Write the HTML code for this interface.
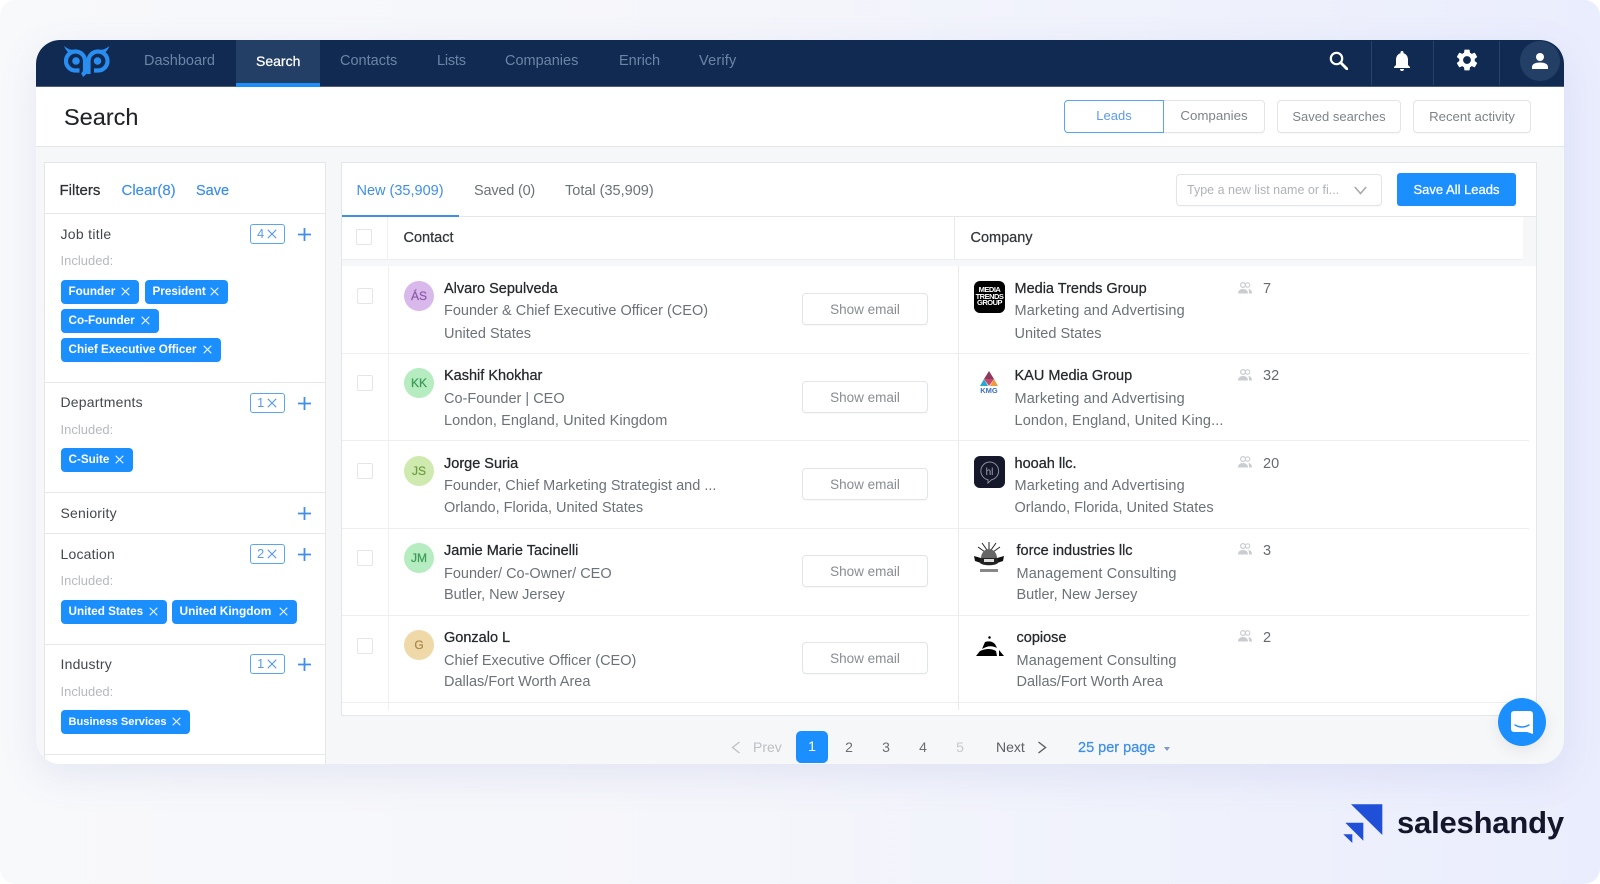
<!DOCTYPE html>
<html lang="en"><head><meta charset="utf-8"><title>Search</title>
<style>
html,body{margin:0;padding:0;background:#fff}
body{width:1600px;height:884px;overflow:hidden;position:relative;font-family:"Liberation Sans",Arial,sans-serif}
#bg{position:absolute;left:0;top:0;width:1600px;height:884px;border-radius:16px;background:linear-gradient(90deg,#f8f9fb 0%,#f5f6fb 45%,#eaedfd 100%)}
#card{position:absolute;left:36px;top:40px;width:1528px;height:724px;border-radius:24px;overflow:hidden;background:#f6f7f9;box-shadow:0 12px 40px rgba(100,110,190,.12)}
#in{position:absolute;left:-36px;top:-40px;width:1600px;height:884px}
.t{position:absolute;white-space:nowrap;line-height:20px;height:20px}
.a{position:absolute}
.m{-webkit-text-stroke:.25px currentColor}
.nav{font-size:14.5px;color:#6c84a6;top:51px}
.btn{position:absolute;box-sizing:border-box;background:#fff;border:1px solid #e2e5e8;border-radius:4px;text-align:center;font-size:13px;color:#7d8489;box-shadow:0 1px 1px rgba(0,0,0,.03)}
.lb{font-size:14px;letter-spacing:.2px;color:#44484d;left:60.5px}
.inc{font-size:13px;color:#b6b9bd;left:60.5px}
.hr{position:absolute;left:45px;width:280px;height:1px;background:#e6e8eb}
.c{position:absolute;box-sizing:border-box;height:24px;line-height:24px;padding-left:7.5px;background:#1c8fff;border-radius:4px;color:#fff;font-size:11.7px;font-weight:bold;white-space:nowrap}
.cx{position:absolute;right:9px;top:7px;width:9px;height:9px;color:#fff}
.b{position:absolute;box-sizing:border-box;left:250px;width:35px;height:20px;border:1px solid #5aa5ee;border-radius:3px;color:#5b9bea;font-size:13px;line-height:18px;padding-left:6px}
.b svg{position:absolute;left:16px;top:4px;width:10px;height:10px;color:#5b9bea}
.pl{position:absolute;left:298px;width:13px;height:13px;color:#3f8fe8}
.ck{position:absolute;box-sizing:border-box;left:357px;width:16px;height:16px;background:#fff;border:1px solid #e3e5e8;border-radius:2px}
.av{position:absolute;left:404px;width:30px;height:30px;border-radius:50%;text-align:center;line-height:30px;font-size:12px;-webkit-text-stroke:.25px currentColor}
.n{font-size:14.5px;color:#25282c;-webkit-text-stroke:.25px #25282c;margin-top:1px}
.s{font-size:14.5px;color:#6b7278;margin-top:1px}
.w{letter-spacing:.14px}
.se{left:802px;width:126px;height:32px;line-height:32px;font-size:13.5px;color:#888d92}
.pp{position:absolute;left:1238px;width:14px;height:12px;color:#c9cdd2}
.cn{font-size:14.5px;color:#666b70;left:1263px;margin-top:1px}
.rl{position:absolute;left:342px;width:1187px;height:1px;background:#eceef0}
.pg{font-size:14px;top:737px;width:30px;text-align:center;color:#6b6f73}
</style></head><body>
<svg width="0" height="0" style="position:absolute">
<symbol id="x" viewBox="0 0 10 10"><path d="M.8.8l8.4 8.4M9.2.8L.8 9.2" stroke="currentColor" stroke-width="1.1" fill="none"/></symbol>
<symbol id="p" viewBox="0 0 13 13"><path d="M6.5 0v13M0 6.5h13" stroke="currentColor" stroke-width="1.8" fill="none"/></symbol>
<symbol id="u" viewBox="0 0 14 12"><circle cx="5" cy="3" r="2.4" fill="none" stroke="currentColor" stroke-width="1.2"/><circle cx="9.6" cy="3" r="2.2" fill="none" stroke="currentColor" stroke-width="1.1"/><path d="M0 11.5c0-3 2.3-4.5 5-4.5s5 1.5 5 4.5zM10.5 7c2 .2 3.5 1.700 3.500 4.500h-3c0-1.800-.2-3.200-.5-4.500z" fill="currentColor"/></symbol>
</svg>
<div id="bg"></div>
<div id="card"><div id="in">
<!-- nav -->
<div class="a" style="left:36px;top:40px;width:1528px;height:47px;background:#112a52;border-bottom:1px solid #4a5f7d;box-sizing:border-box"></div>
<div class="a" style="left:236px;top:40px;width:84px;height:47px;background:#243f66"></div>
<div class="a" style="left:236px;top:82.5px;width:84px;height:4.5px;background:#1c8ffb"></div>
<svg class="a" style="left:60px;top:42px" width="54" height="36" viewBox="60 42 54 36"><g fill="none" stroke="#2a8df0" stroke-width="4.2"><path d="M85 61a9.500 9.500 0 1 0-9.500 9.500h4"/><path d="M88.500 61a9.500 9.500 0 1 1 9.500 9.500h-4"/><path d="M85 60v10q0 3.500-3 5"/><path d="M88.500 60v14"/></g><path d="M64 46q5 4 9 3.800l-3 4.200q-4-3-6-8zM109.500 46q-5 4-9 3.800l3 4.200q4-3 6-8z" fill="#2a8df0"/><circle cx="76" cy="61" r="3.800" fill="#2a8df0"/><circle cx="97.500" cy="61" r="3.800" fill="#2a8df0"/></svg>
<div class="t nav" style="left:144px">Dashboard</div>
<div class="t nav m" style="left:256px;color:#fff;font-size:14px">Search</div>
<div class="t nav" style="left:340px">Contacts</div>
<div class="t nav" style="left:437px;letter-spacing:-.2px">Lists</div>
<div class="t nav" style="left:505px">Companies</div>
<div class="t nav" style="left:619px">Enrich</div>
<div class="t nav" style="left:699px;letter-spacing:.2px">Verify</div>
<svg class="a" style="left:1329px;top:51px" width="19" height="19" viewBox="0 0 19 19"><circle cx="7.5" cy="7.5" r="5.7" fill="none" stroke="#fff" stroke-width="2.2"/><path d="M11.8 11.8L18 18" stroke="#fff" stroke-width="2.8" stroke-linecap="round"/></svg>
<div class="a" style="left:1371px;top:41px;width:1px;height:44px;background:#2a4268"></div>
<div class="a" style="left:1433px;top:41px;width:1px;height:44px;background:#2a4268"></div>
<div class="a" style="left:1499px;top:41px;width:1px;height:44px;background:#2a4268"></div>
<svg class="a" style="left:1390px;top:49px" width="24" height="24" viewBox="0 0 24 24"><path fill="#fff" d="M12 2a1.5 1.5 0 0 0-1.5 1.5v.7C7.6 5 6 7.6 6 10.5V16l-2 2v1h16v-1l-2-2v-5.5c0-2.9-1.6-5.5-4.5-6.3v-.7A1.5 1.5 0 0 0 12 2zM10 20a2 2 0 0 0 4 0z"/></svg>
<svg class="a" style="left:1454px;top:47px" width="26" height="26" viewBox="0 0 24 24"><path fill="#fff" d="M19.14 12.94c.04-.3.06-.61.06-.94 0-.32-.02-.64-.07-.94l2.03-1.58a.49.49 0 0 0 .12-.61l-1.92-3.32a.488.488 0 0 0-.59-.22l-2.39.96c-.5-.38-1.03-.7-1.62-.94l-.36-2.54a.484.484 0 0 0-.48-.41h-3.84c-.24 0-.43.17-.47.41l-.36 2.54c-.59.24-1.13.57-1.62.94l-2.39-.96c-.22-.08-.47 0-.59.22L2.74 8.87c-.12.21-.08.47.12.61l2.03 1.58c-.05.3-.09.63-.09.94s.02.64.07.94l-2.03 1.58a.49.49 0 0 0-.12.61l1.92 3.32c.12.22.37.29.59.22l2.39-.96c.5.38 1.03.7 1.62.94l.36 2.54c.05.24.24.41.48.41h3.84c.24 0 .44-.17.47-.41l.36-2.54c.59-.24 1.13-.56 1.62-.94l2.39.96c.22.08.47 0 .59-.22l1.92-3.32c.12-.22.07-.47-.12-.61l-2.01-1.58zM12 15.6c-1.98 0-3.6-1.62-3.6-3.6s1.62-3.6 3.6-3.6 3.6 1.62 3.6 3.6-1.62 3.6-3.6 3.6z"/></svg>
<div class="a" style="left:1520px;top:41px;width:40px;height:40px;border-radius:50%;background:#243f66"></div>
<svg class="a" style="left:1530px;top:51px" width="20" height="20" viewBox="0 0 20 20"><circle cx="10" cy="6" r="4" fill="#fff"/><path d="M2 18v-2c0-3 3.500-4.500 8-4.500s8 1.500 8 4.500v2z" fill="#fff"/></svg>
<!-- header -->
<div class="a" style="left:36px;top:87px;width:1528px;height:60px;background:#fff;border-bottom:1px solid #e4e7ea;box-sizing:border-box"></div>
<div class="t" style="left:64px;top:107px;font-size:23.5px;line-height:20px;color:#1f2226;-webkit-text-stroke:.1px #1f2226">Search</div>
<div class="btn" style="left:1163px;top:100px;width:102px;height:33px;line-height:30px;border-radius:0 4px 4px 0;font-size:13.3px">Companies</div>
<div class="btn" style="left:1064px;top:100px;width:100px;height:33px;line-height:30px;border-color:#5aa5ee;color:#5b9bea;border-radius:4px 0 0 4px">Leads</div>
<div class="btn" style="left:1277px;top:100px;width:124px;height:33px;line-height:31px;font-size:13px">Saved searches</div>
<div class="btn" style="left:1413px;top:100px;width:118px;height:33px;line-height:31px;font-size:13.2px">Recent activity</div>
<!-- filters -->
<div class="a" style="left:44px;top:162px;width:282px;height:620px;background:#fff;border:1px solid #e4e7ea;box-sizing:border-box"></div>
<div class="t m" style="left:59.5px;top:180.5px;font-size:15px;color:#2c3034">Filters</div>
<div class="t" style="left:121.5px;top:180.5px;font-size:15px;color:#3e8fe6;-webkit-text-stroke:.15px #3e8fe6">Clear(8)</div>
<div class="t" style="left:196px;top:180.5px;font-size:14.5px;color:#3e8fe6;-webkit-text-stroke:.2px #3e8fe6">Save</div>
<div class="hr" style="top:213px"></div>
<div class="t lb" style="top:224px;letter-spacing:.3px">Job title</div>
<div class="b" style="top:224px">4<svg><use href="#x"/></svg></div>
<svg class="pl" style="top:228px"><use href="#p"/></svg>
<div class="t inc" style="top:251px">Included:</div>
<div class="c" style="left:61px;top:280px;width:78px">Founder<svg class="cx"><use href="#x"/></svg></div>
<div class="c" style="left:145px;top:280px;width:83px">President<svg class="cx"><use href="#x"/></svg></div>
<div class="c" style="left:61px;top:308.5px;width:98px">Co-Founder<svg class="cx"><use href="#x"/></svg></div>
<div class="c" style="left:61px;top:337.5px;width:160px">Chief Executive Officer<svg class="cx"><use href="#x"/></svg></div>
<div class="hr" style="top:382px"></div>
<div class="t lb" style="top:392px">Departments</div>
<div class="b" style="top:393px">1<svg><use href="#x"/></svg></div>
<svg class="pl" style="top:396.5px"><use href="#p"/></svg>
<div class="t inc" style="top:420px">Included:</div>
<div class="c" style="left:61px;top:448px;width:71.5px">C-Suite<svg class="cx"><use href="#x"/></svg></div>
<div class="hr" style="top:492px"></div>
<div class="t lb" style="top:503px">Seniority</div>
<svg class="pl" style="top:507px"><use href="#p"/></svg>
<div class="hr" style="top:533px"></div>
<div class="t lb" style="top:543.5px">Location</div>
<div class="b" style="top:544px">2<svg><use href="#x"/></svg></div>
<svg class="pl" style="top:548px"><use href="#p"/></svg>
<div class="t inc" style="top:571px">Included:</div>
<div class="c" style="left:61px;top:599.5px;width:106px">United States<svg class="cx"><use href="#x"/></svg></div>
<div class="c" style="left:172px;top:599.5px;width:124.5px;font-size:11.9px;line-height:23px">United Kingdom<svg class="cx"><use href="#x"/></svg></div>
<div class="hr" style="top:644px"></div>
<div class="t lb" style="top:654px">Industry</div>
<div class="b" style="top:654px">1<svg><use href="#x"/></svg></div>
<svg class="pl" style="top:658px"><use href="#p"/></svg>
<div class="t inc" style="top:682px">Included:</div>
<div class="c" style="left:61px;top:710px;width:128.5px;font-size:11.1px">Business Services<svg class="cx"><use href="#x"/></svg></div>
<div class="hr" style="top:754px"></div>
<!-- right panel -->
<div class="a" style="left:341px;top:162px;width:1196px;height:554px;background:#fff;border:1px solid #e4e7ea;box-sizing:border-box"></div>
<div class="t" style="left:356.5px;top:180.5px;font-size:14.5px;color:#3e8fe6">New (35,909)</div>
<div class="t" style="left:474px;top:180.5px;font-size:14.5px;letter-spacing:-.2px;color:#6b7278">Saved (0)</div>
<div class="t" style="left:565px;top:180.5px;font-size:14.5px;color:#6b7278">Total (35,909)</div>
<div class="a" style="left:342px;top:216px;width:1194px;height:1px;background:#e4e7ea"></div>
<div class="a" style="left:342px;top:215px;width:117px;height:2px;background:#3e8fe6"></div>
<div class="btn" style="left:1176px;top:174px;width:206px;height:32px"></div>
<div class="t" style="left:1187px;top:180px;font-size:12.5px;color:#b0b3b8">Type a new list name or fi...</div>
<svg class="a" style="left:1354px;top:186px" width="13" height="9" viewBox="0 0 13 9"><path d="M.8 1l5.7 6.500L12.200 1" fill="none" stroke="#a7abaf" stroke-width="1.6"/></svg>
<div class="a m" style="left:1397px;top:173px;width:119px;height:33px;line-height:33px;background:#1c8fff;border-radius:3px;color:#fff;text-align:center;font-size:13px">Save All Leads</div>
<!-- table header -->
<div class="a" style="left:342px;top:259px;width:1194px;height:7px;background:#f6f7f9"></div>
<div class="a" style="left:1523px;top:217px;width:13px;height:49px;background:#f6f7f9"></div>
<div class="a" style="left:342px;top:259px;width:1181px;height:1px;background:#eceef0"></div>
<div class="a" style="left:387px;top:217px;width:1px;height:42px;background:#eef0f2"></div>
<div class="a" style="left:954px;top:217px;width:1px;height:42px;background:#e8eaec"></div>
<div class="ck" style="top:229px;left:356px"></div>
<div class="t m" style="left:403.5px;top:228px;font-size:14.5px;color:#33373b">Contact</div>
<div class="t m" style="left:970.5px;top:228px;font-size:14.5px;color:#33373b">Company</div>
<!-- rows -->
<div class="a" style="left:388px;top:266px;width:1px;height:444px;background:#eef0f2"></div>
<div class="a" style="left:958px;top:266px;width:1px;height:444px;background:#e8eaec"></div>
<div class="rl" style="top:353px"></div><div class="rl" style="top:440px"></div><div class="rl" style="top:528px"></div><div class="rl" style="top:615px"></div><div class="rl" style="top:702px"></div>

<div class="ck" style="top:288px"></div>
<div class="av" style="top:281px;background:#d9b8ec;color:#8c5aa8">ÁS</div>
<div class="t n" style="left:444px;top:278px">Alvaro Sepulveda</div>
<div class="t s" style="left:444px;top:300px">Founder &amp; Chief Executive Officer (CEO)</div>
<div class="t s" style="left:444px;top:322.5px">United States</div>
<div class="btn se" style="top:293px">Show email</div>
<div class="a" style="left:974px;top:281px;width:31px;height:32px;background:#000;border-radius:6px;color:#fff;font:bold 7.5px/6.5px 'Liberation Sans',sans-serif;text-align:center;padding-top:6px;box-sizing:border-box;letter-spacing:-.5px">MEDIA<br>TRENDS<br>GROUP</div>
<div class="t n" style="left:1014.5px;top:278px">Media Trends Group</div>
<div class="t s w" style="left:1014.5px;top:300px">Marketing and Advertising</div>
<div class="t s" style="left:1014.5px;top:322.5px">United States</div>
<svg class="pp" style="top:282px"><use href="#u"/></svg>
<div class="t cn" style="top:278px">7</div>

<div class="ck" style="top:375px"></div>
<div class="av" style="top:368px;background:#b5ecc0;color:#3f9c5a">KK</div>
<div class="t n" style="left:444px;top:365px">Kashif Khokhar</div>
<div class="t s" style="left:444px;top:388px">Co-Founder | CEO</div>
<div class="t s w" style="left:444px;top:409.5px;letter-spacing:.08px">London, England, United Kingdom</div>
<div class="btn se" style="top:381px">Show email</div>
<svg class="a" style="left:978px;top:370px" width="22" height="26" viewBox="0 0 22 26"><path d="M11 1l5 8H6z" fill="#8b3a5e"/><path d="M6 9l-4 7h8z" fill="#29a8c9"/><path d="M16 9l4 7h-8z" fill="#f09a3e"/><path d="M6 9h10l-5 7z" fill="#c9486a"/><text x="11" y="23" font-size="7.5" font-weight="bold" text-anchor="middle" fill="#3b6fc0" font-family="Liberation Sans">KMG</text></svg>
<div class="t n" style="left:1014.5px;top:365px">KAU Media Group</div>
<div class="t s w" style="left:1014.5px;top:388px">Marketing and Advertising</div>
<div class="t s w" style="left:1014.5px;top:409.5px">London, England, United King...</div>
<svg class="pp" style="top:369px"><use href="#u"/></svg>
<div class="t cn" style="top:365px">32</div>

<div class="ck" style="top:463px"></div>
<div class="av" style="top:456px;background:#cfeaae;color:#6f9c43">JS</div>
<div class="t n" style="left:444px;top:453px">Jorge Suria</div>
<div class="t s" style="left:444px;top:475px">Founder, Chief Marketing Strategist and ...</div>
<div class="t s" style="left:444px;top:497px">Orlando, Florida, United States</div>
<div class="btn se" style="top:468px">Show email</div>
<div class="a" style="left:974px;top:456px;width:31px;height:32px;background:#15172a;border-radius:6px"></div>
<svg class="a" style="left:974px;top:456px" width="31" height="32" viewBox="0 0 31 32"><path d="M15.5 6a9 9 0 0 1 2 17.800L14 27v-3.200A9 9 0 0 1 15.5 6z" fill="none" stroke="#8c8f9a" stroke-width="1"/><text x="15.5" y="19" font-size="10" text-anchor="middle" fill="#a5a8b2" font-family="Liberation Sans">hl</text></svg>
<div class="t n" style="left:1014.5px;top:453px">hooah llc.</div>
<div class="t s w" style="left:1014.5px;top:475px">Marketing and Advertising</div>
<div class="t s" style="left:1014.5px;top:497px">Orlando, Florida, United States</div>
<svg class="pp" style="top:456px"><use href="#u"/></svg>
<div class="t cn" style="top:452.5px">20</div>

<div class="ck" style="top:549.5px"></div>
<div class="av" style="top:543px;background:#b5ecc0;color:#3f9c5a">JM</div>
<div class="t n" style="left:444px;top:540px">Jamie Marie Tacinelli</div>
<div class="t s" style="left:444px;top:562.5px">Founder/ Co-Owner/ CEO</div>
<div class="t s" style="left:444px;top:584px">Butler, New Jersey</div>
<div class="btn se" style="top:555px">Show email</div>
<svg class="a" style="left:973px;top:541px" width="32" height="34" viewBox="0 0 32 34"><g stroke="#222" stroke-width="1" fill="none"><path d="M9 2l5 7M23 2l-5 7M16 1v8M5 6l7 5M27 6l-7 5"/></g><path d="M16 8c5 0 8 5 8 9H8c0-4 3-9 8-9z" fill="#666"/><path d="M1 15l7 2 0 5-6-2zM31 15l-7 2 0 5 6-2z" fill="#111"/><path d="M7 17h18v5c-3 3-15 3-18 0z" fill="#222"/><rect x="11" y="18" width="10" height="3" fill="#ddd"/><rect x="7" y="28" width="18" height="3" fill="#888"/></svg>
<div class="t n" style="left:1016.5px;top:540px">force industries llc</div>
<div class="t s w" style="left:1016.5px;top:562.5px">Management Consulting</div>
<div class="t s" style="left:1016.5px;top:584px">Butler, New Jersey</div>
<svg class="pp" style="top:543px"><use href="#u"/></svg>
<div class="t cn" style="top:539.5px">3</div>

<div class="ck" style="top:637.5px"></div>
<div class="av" style="top:630px;background:#f0d9a8;color:#a98a4a">G</div>
<div class="t n" style="left:444px;top:627px">Gonzalo L</div>
<div class="t s" style="left:444px;top:649.5px">Chief Executive Officer (CEO)</div>
<div class="t s" style="left:444px;top:671px">Dallas/Fort Worth Area</div>
<div class="btn se" style="top:642px">Show email</div>
<svg class="a" style="left:975px;top:635px" width="30" height="24" viewBox="0 0 30 24"><path d="M13 2l2-1 1 2-2 1zM10 7q6-2 10 2l2 4q-7-4-15 1zM5 16q9-4 16 0l1 5H1zM24 15l5 6h-5z" fill="#000"/></svg>
<div class="t n" style="left:1016.5px;top:627px">copiose</div>
<div class="t s w" style="left:1016.5px;top:649.5px">Management Consulting</div>
<div class="t s" style="left:1016.5px;top:671px">Dallas/Fort Worth Area</div>
<svg class="pp" style="top:630px"><use href="#u"/></svg>
<div class="t cn" style="top:626.5px">2</div>

<!-- pagination -->
<svg class="a" style="left:731px;top:741px" width="10" height="13" viewBox="0 0 10 13"><path d="M8.5 1L1.5 6.5 8.5 12" fill="none" stroke="#bfc2c5" stroke-width="1.4"/></svg>
<div class="t" style="left:753px;top:737px;font-size:14px;color:#bdbfc2">Prev</div>
<div class="a" style="left:796px;top:731px;width:32px;height:32px;background:#1c8fff;border-radius:5px;color:#fff;text-align:center;line-height:31px;font-size:14px">1</div>
<div class="t pg" style="left:834px">2</div>
<div class="t pg" style="left:871px">3</div>
<div class="t pg" style="left:908px">4</div>
<div class="t pg" style="left:945px;color:#c6c8ca">5</div>
<div class="t" style="left:996px;top:737px;font-size:14px;color:#5c6064">Next</div>
<svg class="a" style="left:1037px;top:741px" width="10" height="13" viewBox="0 0 10 13"><path d="M1.5 1l7 5.500-7 5.500" fill="none" stroke="#5c6064" stroke-width="1.4"/></svg>
<div class="t m" style="left:1078px;top:738px;font-size:14.5px;color:#3e8fe6">25 per page</div>
<div class="a" style="left:1164px;top:747px;width:0;height:0;border-left:3.5px solid transparent;border-right:3.5px solid transparent;border-top:4px solid #7d9cc4"></div>
</div></div>
<!-- chat -->
<div class="a" style="left:1498px;top:698px;width:48px;height:48px;border-radius:50%;background:#1c8fff;box-shadow:0 4px 16px rgba(0,0,0,.08)"></div>
<svg class="a" style="left:1511px;top:711px" width="22" height="24" viewBox="0 0 22 24"><path d="M3 0h16a3 3 0 0 1 3 3v20l-6-2H3a3 3 0 0 1-3-3V3a3 3 0 0 1 3-3z" fill="#fff"/><path d="M4 14q7 4 14 0" fill="none" stroke="#1c8fff" stroke-width="1.4" stroke-linecap="round"/></svg>
<!-- saleshandy -->
<svg class="a" style="left:1340px;top:800px" width="48" height="48" viewBox="1340 800 48 48"><path d="M1351 804.3h31.3V835z" fill="#2150d8"/><path d="M1345.3 822.7h18v18z" fill="#2150d8"/><path d="M1343.3 834.3h9v8.700z" fill="#2150d8"/></svg>
<div class="t" style="left:1397px;top:808px;height:30px;line-height:30px;font-size:31px;font-weight:bold;letter-spacing:-.2px;color:#14162b">saleshandy</div>
</body></html>
